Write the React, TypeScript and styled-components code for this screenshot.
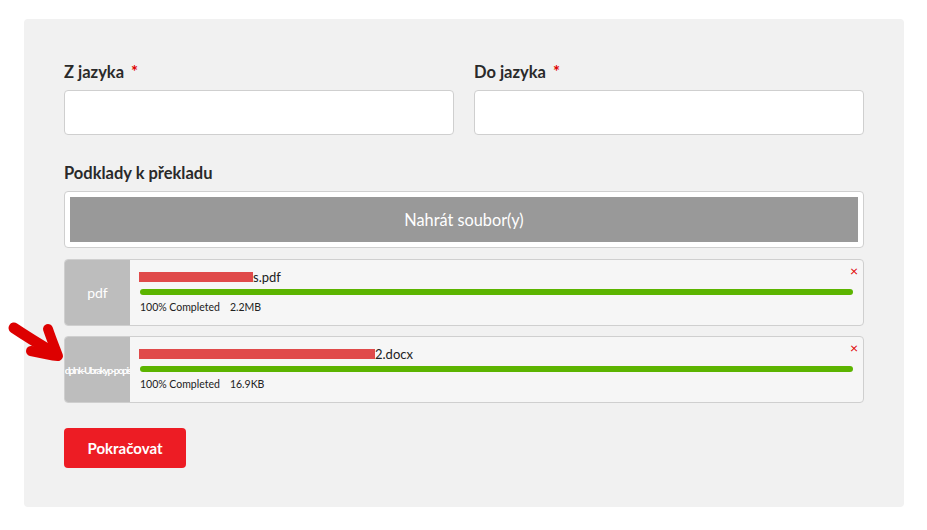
import React from 'react';
import styled, {createGlobalStyle} from 'styled-components';

const GlobalStyle = createGlobalStyle`
    body {
        margin: 0;
        background: white;
        font-family: "Lato", "Open Sans", sans-serif;
        color: #222;
    }
`;

type UploadedFile = {
    thumb: string;
    small?: boolean;
    redact: number;
    suffix: string;
    size: string;
};

const files: UploadedFile[] = [
    {thumb: 'pdf', redact: 114, suffix: 's.pdf', size: '2.2MB'},
    {thumb: 'dplnk-Ubrakyp-popis', small: true, redact: 236, suffix: '2.docx', size: '16.9KB'},
];

const Arrow = () => (
    <ArrowMark width="70" height="50" viewBox="0 0 70 50">
        <path d="M13 12 C25 20 38 28 53 37" stroke="#dd0000" strokeWidth="11" strokeLinecap="round" fill="none"/>
        <path d="M47 13 C50 22 54 32 57 40 C48 39 39 37 30 35" stroke="#dd0000" strokeWidth="10" strokeLinecap="round" strokeLinejoin="round" fill="none"/>
    </ArrowMark>
);

const App: React.FunctionComponent = () => {
    return (
        <Page>
            <GlobalStyle/>
            <Panel>
                <Row>
                    <Field>
                        <Label>Z jazyka <Star>*</Star></Label>
                        <Input type="text"/>
                    </Field>
                    <Field>
                        <Label>Do jazyka <Star>*</Star></Label>
                        <Input type="text"/>
                    </Field>
                </Row>
                <Section>
                    <Label>Podklady k překladu</Label>
                    <UploadBox>
                        <UploadButton type="button">Nahrát soubor(y)</UploadButton>
                    </UploadBox>
                    {files.map((file, index) => (
                        <FileRow key={index}>
                            {index === 1 && <Arrow/>}
                            <Thumb $small={file.small}>{file.thumb}</Thumb>
                            <FileBody>
                                <FileName>
                                    <Redact style={{width: file.redact}}/>{file.suffix}
                                </FileName>
                                <Progress/>
                                <Meta>
                                    <span>100% Completed</span>
                                    <span>{file.size}</span>
                                </Meta>
                                <Remove>×</Remove>
                            </FileBody>
                        </FileRow>
                    ))}
                </Section>
                <Submit type="button">Pokračovat</Submit>
            </Panel>
        </Page>
    );
}

const Page = styled.div`
    padding: 19px 23px 23px 24px;
`;

const Panel = styled.div`
    background: #f1f1f1;
    border-radius: 4px;
    padding: 42px 40px 39px 40px;
    width: 880px;
    box-sizing: border-box;
`;

const Row = styled.div`
    display: grid;
    grid-template-columns: 1fr 1fr;
    gap: 20px;
`;

const Field = styled.div`
    display: flex;
    flex-direction: column;
`;

const Label = styled.div`
    font-size: 16.5px;
    font-weight: 700;
    color: #2a2a2a;
    height: 22px;
    line-height: 22px;
    margin-bottom: 7px;
`;

const Star = styled.span`
    color: #e00000;
    margin-left: 3px;
`;

const Input = styled.input`
    height: 45px;
    box-sizing: border-box;
    border: 1px solid #cfcfcf;
    border-radius: 4px;
    background: white;
    outline: none;
`;

const Section = styled.div`
    margin-top: 27px;
    display: flex;
    flex-direction: column;
`;

const UploadBox = styled.div`
    background: white;
    border: 1px solid #cfcfcf;
    border-radius: 4px;
    padding: 5px;
    margin-bottom: 11px;
`;

const UploadButton = styled.button`
    display: block;
    width: 100%;
    height: 45px;
    border: none;
    background: #999999;
    color: white;
    font-family: "Lato", sans-serif;
    font-size: 16.3px;
    cursor: pointer;
`;

const FileRow = styled.div`
    position: relative;
    display: flex;
    height: 67px;
    box-sizing: border-box;
    border: 1px solid #cfcfcf;
    border-radius: 4px;
    background: #f6f6f6;
    margin-bottom: 10px;
`;

const ArrowMark = styled.svg`
    position: absolute;
    left: -64px;
    top: -21px;
`;

const Thumb = styled.div<{$small?: boolean}>`
    width: 65px;
    flex-shrink: 0;
    background: #bdbdbd;
    border-radius: 3px 0 0 3px;
    color: white;
    display: flex;
    align-items: center;
    justify-content: center;
    overflow: hidden;
    white-space: nowrap;
    font-size: ${props => props.$small ? '10px' : '14px'};
    letter-spacing: ${props => props.$small ? '-1.5px' : '0'};
    font-weight: ${props => props.$small ? 700 : 400};
`;

const FileBody = styled.div`
    position: relative;
    flex: 1;
    padding: 9px 10px 0 10px;
`;

const FileName = styled.div`
    font-size: 13px;
    height: 16px;
    line-height: 16px;
    color: #222;
    display: flex;
    align-items: center;
`;

const Redact = styled.span`
    display: inline-block;
    height: 10px;
    margin-left: -1px;
    background: #e04a4a;
`;

const Progress = styled.div`
    margin: 4px 0 0 0;
    height: 6px;
    border-radius: 3px;
    background: #5cb400;
`;

const Meta = styled.div`
    margin-top: 6px;
    font-size: 10.5px;
    color: #222;
    display: flex;
    gap: 10px;
`;

const Remove = styled.span`
    position: absolute;
    right: 5px;
    top: 2px;
    color: #e00000;
    font-size: 14px;
    cursor: pointer;
`;

const Submit = styled.button`
    margin-top: 15px;
    width: 122px;
    height: 40px;
    border: none;
    border-radius: 4px;
    background: #ed1c24;
    color: white;
    font-family: "Lato", sans-serif;
    font-weight: 700;
    font-size: 15px;
    cursor: pointer;
`;

export default App;
